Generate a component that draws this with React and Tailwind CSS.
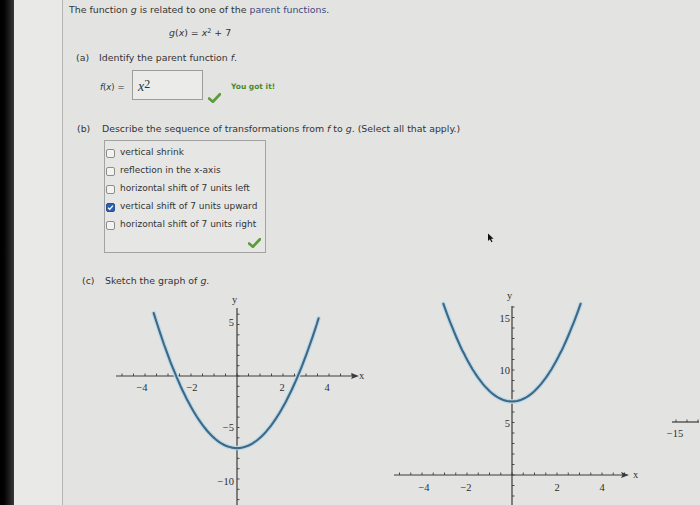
import React from 'react';

const sans = { fontFamily: '"DejaVu Sans", Verdana, sans-serif' };

// parabola y = x^2 + k, sampled into an svg path
const parabola = (ox, oy, sx, sy, k, x0, x1) => {
  const pts = [];
  for (let i = 0; i <= 80; i++) {
    const x = x0 + ((x1 - x0) * i) / 80;
    const y = x * x + k;
    pts.push(`${(ox + x * sx).toFixed(1)},${(oy - y * sy).toFixed(1)}`);
  }
  return 'M' + pts.join(' L');
};

const Tick = ({ x1, y1, x2, y2 }) => <line x1={x1} y1={y1} x2={x2} y2={y2} stroke="#3a3a3a" strokeWidth="0.9" />;

const Curve = ({ d }) => (
  <g fill="none" strokeLinecap="round">
    <path d={d} stroke="#bcd8e6" strokeWidth="4.5" />
    <path d={d} stroke="#3d6886" strokeWidth="2.1" />
  </g>
);

const Check = ({ className }) => (
  <svg viewBox="0 0 12 9" className={className}>
    <path d="M1 5 L4.5 8 L11 1" fill="none" stroke="#5c9d3a" strokeWidth="2.5" strokeLinecap="round" strokeLinejoin="round" />
  </svg>
);

const LeftGraph = () => {
  const ox = 128, oy = 87, sx = 23, sy = 10.3;
  const xt = [];
  for (let i = -10; i <= 10; i++) xt.push(ox + i * sx * 0.5);
  const yt = [];
  for (let j = -12; j <= 6; j++) yt.push(oy - j * sy);
  return (
    <svg width="270" height="216" className="shrink-0" style={{ fontFamily: '"Liberation Serif", serif' }}>
      <line x1="7" y1={oy} x2="246" y2={oy} stroke="#3a3a3a" strokeWidth="1.2" />
      <path d={`M250 ${oy} L242 ${oy - 3} L243.5 ${oy} L242 ${oy + 3} Z`} fill="#3a3a3a" />
      <line x1={ox} y1="19" x2={ox} y2="216" stroke="#3a3a3a" strokeWidth="1.2" />
      {xt.map((x, i) => <Tick key={i} x1={x} y1={oy - 2.5} x2={x} y2={oy} />)}
      {yt.map((y, i) => <Tick key={i} x1={ox} y1={y} x2={ox + 2.5} y2={y} />)}
      <Curve d={parabola(ox, oy, sx, sy, -7, -3.62, 3.55)} />
      <g fontSize="10.5" fill="#2e2e2e">
        <text x="123" y="14">y</text>
        <text x="250" y="90">x</text>
        <text x="33" y="102" textAnchor="middle">−4</text>
        <text x="83" y="102" textAnchor="middle">−2</text>
        <text x="173" y="102" textAnchor="middle">2</text>
        <text x="218" y="102" textAnchor="middle">4</text>
        <text x="125" y="37" textAnchor="end">5</text>
        <text x="125" y="142" textAnchor="end">−5</text>
        <text x="125" y="196" textAnchor="end">−10</text>
      </g>
    </svg>
  );
};

const RightGraph = () => {
  const ox = 133, oy = 186, sx = 22.5, sy = 10.5;
  const xt = [];
  for (let i = -10; i <= 10; i++) xt.push(ox + i * sx * 0.5);
  const yt = [];
  for (let j = -3; j <= 16; j++) yt.push(oy - j * sy);
  return (
    <svg width="265" height="216" className="shrink-0" style={{ fontFamily: '"Liberation Serif", serif' }}>
      <line x1="15" y1={oy} x2="246" y2={oy} stroke="#3a3a3a" strokeWidth="1.2" />
      <path d={`M250 ${oy} L242 ${oy - 3} L243.5 ${oy} L242 ${oy + 3} Z`} fill="#3a3a3a" />
      <line x1={ox} y1="17" x2={ox} y2="216" stroke="#3a3a3a" strokeWidth="1.2" />
      {xt.map((x, i) => <Tick key={i} x1={x} y1={oy - 2.5} x2={x} y2={oy} />)}
      {yt.map((y, i) => <Tick key={i} x1={ox} y1={y} x2={ox + 2.5} y2={y} />)}
      <Curve d={parabola(ox, oy, sx, sy, 7, -3.05, 3.05)} />
      <g fontSize="10.5" fill="#2e2e2e">
        <text x="128" y="10">y</text>
        <text x="254" y="189">x</text>
        <text x="45" y="202" textAnchor="middle">−4</text>
        <text x="87" y="202" textAnchor="middle">−2</text>
        <text x="178" y="202" textAnchor="middle">2</text>
        <text x="223" y="202" textAnchor="middle">4</text>
        <text x="131" y="33" textAnchor="end">15</text>
        <text x="131" y="85" textAnchor="end">10</text>
        <text x="131" y="138" textAnchor="end">5</text>
      </g>
    </svg>
  );
};

const EdgeGraph = () => (
  <svg width="55" height="216" className="shrink-0" style={{ fontFamily: '"Liberation Serif", serif' }}>
    <line x1="28" y1="133" x2="55" y2="133" stroke="#3a3a3a" strokeWidth="1.2" />
    <Tick x1="32" y1="130.5" x2="32" y2="133" />
    <Tick x1="43" y1="130.5" x2="43" y2="133" />
    <Tick x1="54" y1="130.5" x2="54" y2="133" />
    <text x="31" y="148" fontSize="10.5" fill="#2e2e2e" textAnchor="middle">−15</text>
  </svg>
);

const options = [
  { label: 'vertical shrink', checked: false },
  { label: 'reflection in the x-axis', checked: false },
  { label: 'horizontal shift of 7 units left', checked: false },
  { label: 'vertical shift of 7 units upward', checked: true },
  { label: 'horizontal shift of 7 units right', checked: false },
];

export default function App() {
  return (
    <div className="w-[700px] h-[505px] overflow-hidden flex bg-[#e3e4e2]">
      {/* monitor bezel + side gutter */}
      <div className="w-[14px] shrink-0 bg-gradient-to-r from-black via-[#111] to-[#3a3a3a]" />
      <div className="w-[49px] shrink-0 bg-[#e9eae8] border-r border-[#b5b6b4]" />

      <main className="relative flex-1 flex flex-col text-[9.4px] text-[#333]" style={sans}>
        <div className="h-[20px] flex items-center pl-[6px]">
          The function&nbsp;<i>g</i>&nbsp;is related to one of the&nbsp;<span className="text-[#3b4a7e]">parent functions</span>.
        </div>

        <div className="h-[26px] flex items-center pl-[106px]">
          <span><i>g</i>(<i>x</i>) = <i>x</i><sup className="text-[6.5px]">2</sup> + 7</span>
        </div>

        <div className="h-[24px] flex items-center pl-[13px]">
          <span className="w-[23px]">(a)</span>
          <span>Identify the parent function <i>f</i>.</span>
        </div>

        <div className="h-[31px] flex items-start pl-[37px]">
          <span className="mt-[11px] w-[32px] text-[8.5px]"><i>f</i>(<i>x</i>) =</span>
          <div className="w-[71px] h-[30px] border border-[#9c9d9b] bg-[#ebecea] pl-[5px] pt-[5px]" style={{ fontFamily: '"Liberation Serif", serif' }}>
            <span className="text-[14px] italic text-[#333]">x</span>
            <sup className="text-[12px] text-[#333] relative -top-[3px]">2</sup>
          </div>
          <Check className="w-[13px] h-[10px] mt-[23px] ml-[5px]" />
          <span className="ml-[10px] mt-[11px] text-[7.5px] font-bold text-[#4b8a2c]">You got it!</span>
        </div>

        <div className="h-[16px] mt-[20px] flex items-center pl-[14px]">
          <span className="w-[25px]">(b)</span>
          <span>Describe the sequence of transformations from <i>f</i> to <i>g</i>. (Select all that apply.)</span>
        </div>

        <div className="ml-[41px] mt-[3px] w-[162px] h-[113px] border border-[#a3a4a2] bg-[#e6e7e5] pt-[3px] pl-[1px] flex flex-col">
          {options.map((o) => (
            <div key={o.label} className="h-[18px] flex items-center gap-[5px] text-[9px]">
              {o.checked ? (
                <span className="w-[9px] h-[9px] rounded-[2px] bg-[#2f5fb3] border border-[#2a4f90] flex items-center justify-center">
                  <svg viewBox="0 0 8 8" className="w-[7px] h-[7px]">
                    <path d="M1.2 4.2 L3.2 6 L6.8 1.8" fill="none" stroke="#fff" strokeWidth="1.4" />
                  </svg>
                </span>
              ) : (
                <span className="w-[9px] h-[9px] rounded-[2px] bg-[#f2f2f0] border border-[#8d8e8c]" />
              )}
              <span>{o.label}</span>
            </div>
          ))}
          <div className="flex justify-end pr-[4px] mt-[4px]">
            <Check className="w-[13px] h-[10px]" />
          </div>
        </div>

        <div className="h-[16px] mt-[20px] flex items-center pl-[19px]">
          <span className="w-[23px]">(c)</span>
          <span>Sketch the graph of <i>g</i>.</span>
        </div>

        <div className="flex pl-[46px] h-[216px] overflow-hidden">
          <LeftGraph />
          <RightGraph />
          <EdgeGraph />
        </div>

        {/* mouse pointer resting over the page */}
        <svg viewBox="0 0 8 12" className="absolute left-[425px] top-[233px] w-[6px] h-[10px]">
          <path d="M0 0 L0 10 L2.5 7.5 L4.5 11.5 L6 10.8 L4 7 L7.5 7 Z" fill="#111" />
        </svg>
      </main>
    </div>
  );
}
